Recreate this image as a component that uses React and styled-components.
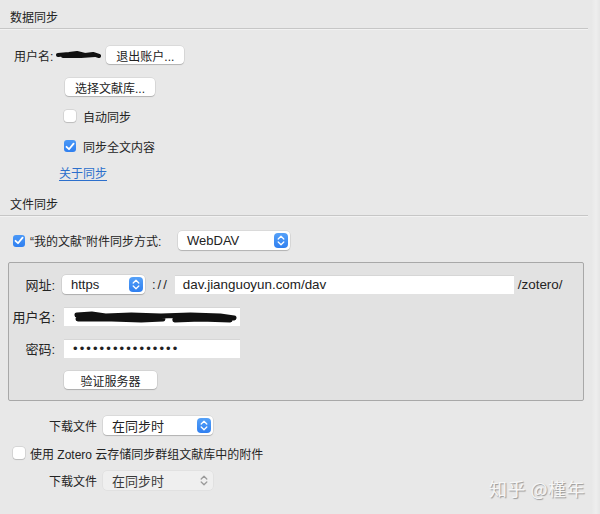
import React from "react";
import styled, { createGlobalStyle } from "styled-components";

const GlobalStyle = createGlobalStyle`
  html, body {
    margin: 0;
    padding: 0;
    background: #e8e8e8;
  }
  body {
    font-family: "Liberation Sans", "Noto Sans CJK SC", sans-serif;
    font-size: 12px;
    color: #242424;
  }
`;

const Chevrons = ({ color = "white" }) => (
  <svg width="8" height="11" viewBox="0 0 8 11" fill="none">
    <path d="M1.2 4 L4 1.3 L6.8 4" stroke={color} strokeWidth="1.3" strokeLinecap="round" strokeLinejoin="round" />
    <path d="M1.2 7 L4 9.7 L6.8 7" stroke={color} strokeWidth="1.3" strokeLinecap="round" strokeLinejoin="round" />
  </svg>
);

const Check = () => (
  <svg width="10" height="9" viewBox="0 0 10 9" fill="none">
    <path d="M1.5 4.8 L4 7.2 L8.6 1.6" stroke="white" strokeWidth="1.8" strokeLinecap="round" strokeLinejoin="round" />
  </svg>
);

const Scribble = ({ width, height, d, weight = 4 }) => (
  <svg width={width} height={height} viewBox={`0 0 ${width} ${height}`} fill="none">
    <path d={d} stroke="#111" strokeWidth={weight} strokeLinecap="round" strokeLinejoin="round" />
  </svg>
);

const Select = ({ value, width, disabled, ml }) => (
  <SelectBox width={width} disabled={disabled} ml={ml}>
    <span>{value}</span>
    <Stepper disabled={disabled}>
      <Chevrons color={disabled ? "#9a9a9a" : "white"} />
    </Stepper>
  </SelectBox>
);

const Checkbox = ({ checked }) => (
  <Box checked={checked}>{checked && <Check />}</Box>
);

export default function App() {
  return (
    <Page>
      <GlobalStyle />
      <Main>
        <Header pt={11}>数据同步</Header>

        <Row mt={17} pl={14}>
          <span>用户名:</span>
          <Redact>
            <Scribble width={46} height={10} d="M3 5 L14 4 L22 3 L30 5 L38 4 L44 6 M8 6 L26 6 L40 5" />
          </Redact>
          <Button width={78} ml={5}>退出账户...</Button>
        </Row>

        <Row mt={14} pl={65}>
          <Button width={90}>选择文献库...</Button>
        </Row>

        <Row mt={11} pl={64}>
          <Checkbox />
          <Label>自动同步</Label>
        </Row>

        <Row mt={12} pl={64}>
          <Checkbox checked />
          <Label>同步全文内容</Label>
        </Row>

        <Row mt={8} pl={59}>
          <Link>关于同步</Link>
        </Row>

        <Header pt={17} mt={0}>文件同步</Header>

        <Row mt={15} pl={13} h={19}>
          <Checkbox checked />
          <Label gap={5} width={135}>“我的文献”附件同步方式:</Label>
          <Select value="WebDAV" width={112} ml={13} />
        </Row>

        <Panel>
          <Row mt={12}>
            <FieldLabel>网址:</FieldLabel>
            <Select value="https" width={83} />
            <Sep>://</Sep>
            <Input width={339}>dav.jianguoyun.com/dav</Input>
            <Suffix>/zotero/</Suffix>
          </Row>
          <Row mt={14}>
            <FieldLabel>用户名:</FieldLabel>
            <Input width={176} ml={2}>
              <Scribble
                width={170}
                height={14}
                weight={5}
                d="M5 5 L20 4 L34 6 L60 5 L90 6 L120 5 L150 6 L164 8 M6 9 L40 9 L70 10 L92 9 M104 10 L130 9 L160 10"
              />
            </Input>
          </Row>
          <Row mt={14}>
            <FieldLabel>密码:</FieldLabel>
            <Input width={176} ml={2}>
              <Dots>••••••••••••••••</Dots>
            </Input>
          </Row>
          <Row mt={14} pl={55}>
            <Button width={93}>验证服务器</Button>
          </Row>
        </Panel>

        <Row mt={15}>
          <DownloadLabel>下载文件</DownloadLabel>
          <Select value="在同步时" width={110} />
        </Row>

        <Row mt={10} pl={13}>
          <Checkbox />
          <Label gap={5}>使用 Zotero 云存储同步群组文献库中的附件</Label>
        </Row>

        <Row mt={9}>
          <DownloadLabel>下载文件</DownloadLabel>
          <Select value="在同步时" width={110} disabled />
        </Row>
      </Main>
      <Edge />
      <Watermark>知乎 @槿年</Watermark>
    </Page>
  );
}

const Page = styled.div`
  position: relative;
  display: flex;
  width: 600px;
  height: 514px;
  overflow: hidden;
  background: #e8e8e8;
`;

const Main = styled.div`
  flex: 1;
  display: flex;
  flex-direction: column;
`;

const Edge = styled.div`
  width: 8px;
  background: linear-gradient(to right, #e9e9e9, #eeeeee 50%, #e6e6e6);
`;

const Header = styled.div`
  margin-top: ${(p) => p.mt || 0}px;
  margin-right: 4px;
  padding: ${(p) => p.pt}px 0 3px 10px;
  line-height: 14px;
  border-bottom: 1px solid #c6c6c6;
  box-shadow: 0 1px 0 #f2f2f2;
  color: #222;
`;

const Row = styled.div`
  display: flex;
  align-items: center;
  height: ${(p) => p.h || 18}px;
  margin-top: ${(p) => p.mt || 0}px;
  padding-left: ${(p) => p.pl || 0}px;
  white-space: nowrap;
`;

const Redact = styled.div`
  display: flex;
  align-items: center;
  margin-left: 2px;
`;

const Button = styled.div`
  display: flex;
  align-items: center;
  justify-content: center;
  box-sizing: border-box;
  width: ${(p) => p.width}px;
  height: 18px;
  margin-left: ${(p) => p.ml || 0}px;
  background: #fff;
  border-radius: 4px;
  box-shadow: 0 0 0 0.5px rgba(0, 0, 0, 0.12), 0 1px 1px rgba(0, 0, 0, 0.18);
  color: #222;
`;

const Box = styled.div`
  display: flex;
  align-items: center;
  justify-content: center;
  box-sizing: border-box;
  width: 12px;
  height: 12px;
  border-radius: 3px;
  background: ${(p) => (p.checked ? "linear-gradient(#4a98f7, #2f7ff0)" : "#fff")};
  box-shadow: ${(p) =>
    p.checked ? "none" : "0 0 0 0.5px rgba(0,0,0,0.15), 0 1px 1px rgba(0,0,0,0.12)"};
`;

const Label = styled.span`
  margin-left: ${(p) => p.gap || 7}px;
  ${(p) => (p.width ? `width: ${p.width}px;` : "")}
`;

const Link = styled.span`
  color: #2c6fcc;
  text-decoration: underline;
  text-underline-offset: 2px;
`;

const SelectBox = styled.div`
  display: flex;
  align-items: center;
  justify-content: space-between;
  box-sizing: border-box;
  width: ${(p) => p.width}px;
  height: 19px;
  margin-left: ${(p) => p.ml || 0}px;
  padding: 0 2px 0 9px;
  border-radius: 4px;
  background: ${(p) => (p.disabled ? "#efefef" : "#fff")};
  box-shadow: ${(p) =>
    p.disabled ? "0 0 0 0.5px rgba(0,0,0,0.06)" : "0 0 0 0.5px rgba(0,0,0,0.12), 0 1px 1px rgba(0,0,0,0.18)"};
  color: ${(p) => (p.disabled ? "#3a3a3a" : "#222")};
  font-size: 13px;
`;

const Stepper = styled.div`
  display: flex;
  align-items: center;
  justify-content: center;
  width: 14px;
  height: 15px;
  border-radius: 4px;
  background: ${(p) => (p.disabled ? "transparent" : "linear-gradient(#55a1f8, #2f7ff0)")};
`;

const Panel = styled.div`
  display: flex;
  flex-direction: column;
  box-sizing: border-box;
  width: 576px;
  height: 139px;
  margin: 12px 0 0 8px;
  border: 1px solid #a8a8a8;
  border-radius: 2px;
  background: #e2e2e2;
`;

const FieldLabel = styled.span`
  width: 46px;
  margin-right: 7px;
  text-align: right;
  font-size: 13px;
`;

const Sep = styled.span`
  margin: 0 6px 0 7px;
  font-size: 13px;
  letter-spacing: 2px;
`;

const Input = styled.div`
  display: flex;
  align-items: center;
  box-sizing: border-box;
  width: ${(p) => p.width}px;
  height: 19px;
  margin-left: ${(p) => p.ml || 0}px;
  padding-left: 8px;
  background: #fff;
  border-top: 1px solid #d6d6d6;
  overflow: hidden;
  font-size: 13.4px;
  color: #222;
`;

const Dots = styled.span`
  font-size: 13px;
  letter-spacing: 2.1px;
  padding-left: 1px;
`;

const Suffix = styled.span`
  margin-left: 4px;
  font-size: 13.4px;
`;

const DownloadLabel = styled.span`
  width: 97px;
  margin-right: 6px;
  text-align: right;
`;

const Watermark = styled.div`
  position: absolute;
  right: 15px;
  bottom: 13px;
  font-family: "Noto Sans CJK SC", sans-serif;
  font-size: 18px;
  color: #f6f6f6;
  text-shadow: 1px 1px 1px rgba(0, 0, 0, 0.35);
  letter-spacing: 0.5px;
`;
